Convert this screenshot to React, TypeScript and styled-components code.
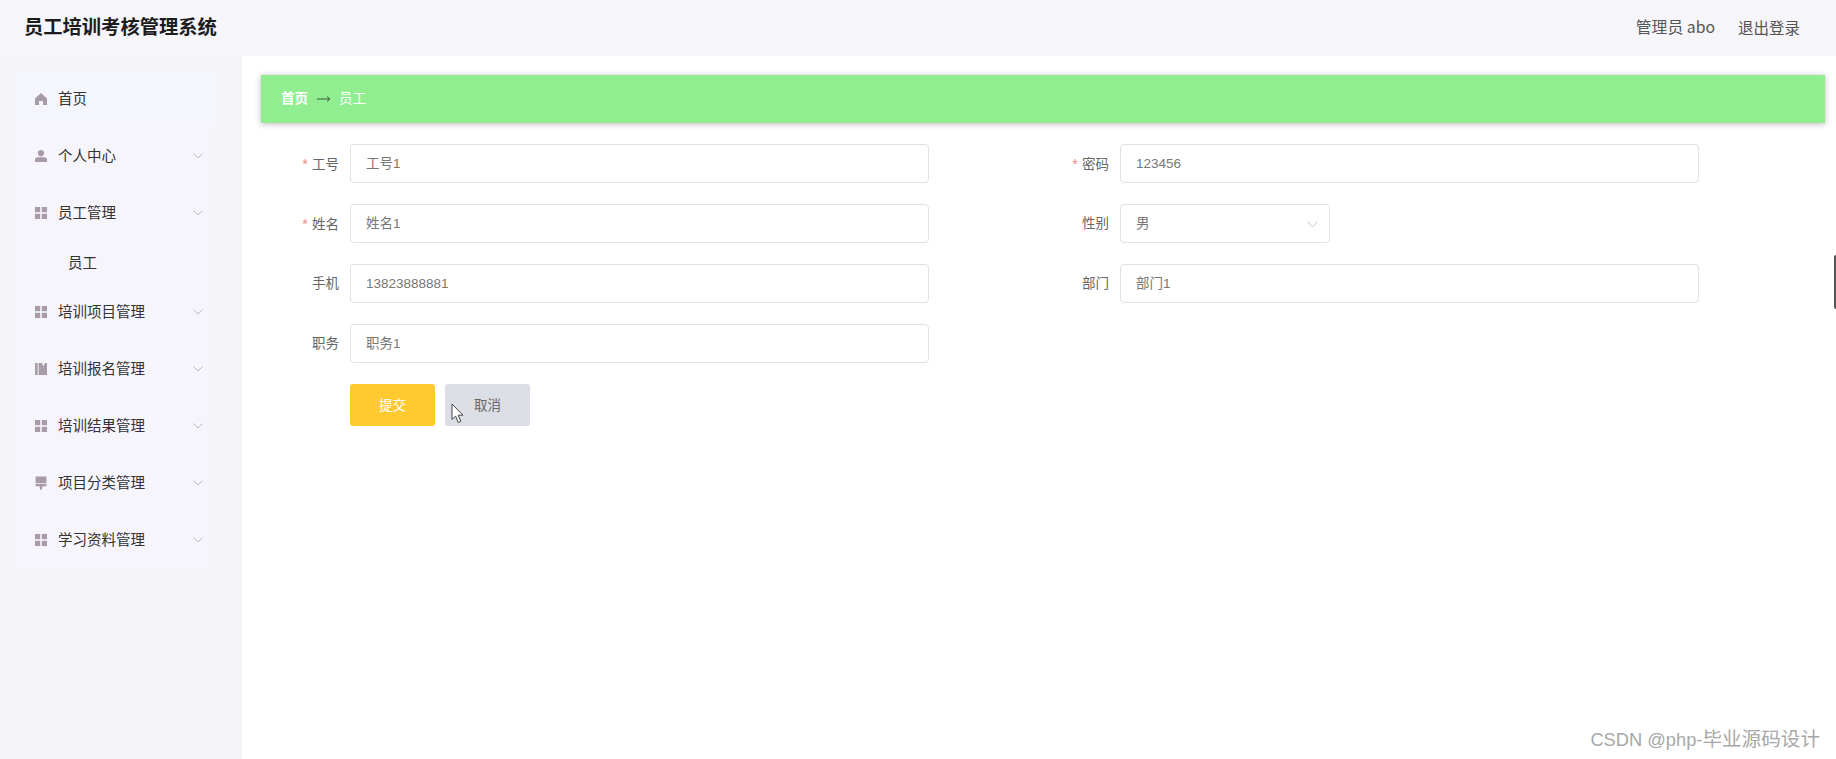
import React from "react";
import styled, { createGlobalStyle } from "styled-components";

const Global = createGlobalStyle`
  html, body { margin: 0; padding: 0; background: #fff; overflow: hidden; }
  body { font-family: "Liberation Sans", "Noto Sans CJK SC", sans-serif; }
  * { box-sizing: border-box; }
`;

const Page = styled.div`
  position: relative;
  width: 1836px;
  height: 759px;
  display: flex;
  flex-direction: column;
  overflow: hidden;
`;

const Header = styled.header`
  flex: 0 0 56px;
  display: flex;
  align-items: center;
  justify-content: space-between;
  padding: 0 36px 0 24px;
  background: #f5f5fa;
`;

const Title = styled.h1`
  margin: 0;
  font-size: 19.3px;
  line-height: 24px;
  font-weight: 700;
  color: #1c1c1c;
`;

const HeaderActions = styled.div`
  display: flex;
  gap: 23px;
  padding-bottom: 2px;
  font-family: "Noto Sans CJK SC", sans-serif;
  font-size: 15.5px;
  line-height: 24px;
  color: #555;
`;

const AdminName = styled.span`
  font-size: 15.8px;
`;

const Body = styled.div`
  flex: 1;
  display: flex;
  min-height: 0;
`;

const Sidebar = styled.aside`
  flex: 0 0 242px;
  background: #f5f5f9;
  padding: 14px 0 0 10px;
`;

const Menu = styled.nav`
  width: 203px;
  background: #f5f5fb;
  padding-bottom: 3px;
`;

const MenuItem = styled.div<{ $active?: boolean }>`
  display: flex;
  align-items: center;
  height: 57px;
  padding-left: 25px;
  width: ${(p) => (p.$active ? "212px" : "auto")};
  background: ${(p) => (p.$active ? "#f5f5fc" : "transparent")};
  font-size: 14.5px;
  color: #333;
`;

const MenuIcon = styled.svg`
  flex: 0 0 12px;
  width: 12px;
  height: 12px;
  margin-right: 11px;
  fill: #a89aa8;
  overflow: visible;
`;

const MenuLabel = styled.span`
  flex: 1;
  line-height: 20px;
`;

const Chevron = styled.svg`
  flex: 0 0 10px;
  width: 10px;
  height: 6px;
  margin-right: 10px;
  fill: none;
  stroke: #b9b9c2;
  stroke-width: 1;
`;

const SubItem = styled.div`
  height: 42px;
  display: flex;
  align-items: center;
  padding: 1px 0 0 58px;
  font-size: 14.5px;
  line-height: 20px;
  color: #333;
`;

const Main = styled.main`
  flex: 1;
  min-width: 0;
  padding: 19px 11px 0 19px;
`;

const Crumbs = styled.div`
  height: 48px;
  display: flex;
  align-items: center;
  padding-left: 20px;
  background: #90ee90;
  box-shadow: 0 1px 6px rgba(70, 50, 70, 0.35);
  font-size: 13.5px;
  line-height: 20px;
  color: #fff;
`;

const CrumbRoot = styled.span`
  font-weight: 700;
`;

const CrumbArrow = styled.svg`
  width: 14px;
  height: 8px;
  margin: 0 8px 0 9px;
  fill: none;
  stroke: #3d5a3d;
  stroke-width: 1;
`;

const Form = styled.form`
  display: grid;
  grid-template-columns: 770px 1fr;
  row-gap: 21px;
  margin-top: 21px;
`;

const Field = styled.div`
  display: flex;
  align-items: center;
  height: 39px;
  margin-left: -2px;
`;

const Label = styled.label`
  flex: 0 0 80px;
  margin-right: 11px;
  padding-top: 1px;
  text-align: right;
  font-size: 13.5px;
  line-height: 20px;
  color: #666;
`;

const Star = styled.span`
  margin-right: 4px;
  font-size: 14.5px;
  color: #f08a8a;
`;

const TextInput = styled.div<{ $w?: number }>`
  width: ${(p) => p.$w ?? 579}px;
  height: 39px;
  display: flex;
  align-items: center;
  justify-content: space-between;
  padding: 1px 15px 0;
  background: #fff;
  border: 1px solid #e0e1e8;
  border-radius: 4px;
  font-size: 13.5px;
  line-height: 20px;
  color: #777;
`;

const SelectChevron = styled.svg`
  width: 11px;
  height: 7px;
  margin-right: -4px;
  fill: none;
  stroke: #c8c8d0;
  stroke-width: 1;
`;

const Actions = styled.div`
  grid-column: 1 / -1;
  display: flex;
  gap: 10px;
  margin-left: 89px;
`;

const Btn = styled.button<{ $primary?: boolean }>`
  width: 85px;
  height: 42px;
  padding: 1px 0 0;
  border: 0;
  border-radius: 3px;
  background: ${(p) => (p.$primary ? "#ffca30" : "#dcdee5")};
  color: ${(p) => (p.$primary ? "#fff" : "#666")};
  font-family: inherit;
  font-size: 13.5px;
  line-height: 20px;
`;

const Cursor = styled.svg`
  position: absolute;
  left: 451px;
  top: 403px;
  width: 13px;
  height: 21px;
`;

const ScrollEdge = styled.div`
  position: absolute;
  right: 0;
  top: 255px;
  width: 2px;
  height: 54px;
  background: #555;
  border-radius: 2px 0 0 2px;
`;

const Watermark = styled.div`
  position: absolute;
  right: 16px;
  top: 726px;
  font-size: 18.3px;
  line-height: 26px;
  color: #a8a8a8;
  white-space: nowrap;
`;

const WatermarkCjk = styled.span`
  font-size: 19.6px;
`;

const icons: Record<string, React.ReactNode> = {
  home: <path d="M6 0 12 5.6V12H8V8H4v4H0V5.6z" />,
  user: (
    <>
      <circle cx="6" cy="3.1" r="3.1" />
      <path d="M0 12V9.6C0 8 1.6 7.2 3 7.2h6c1.4 0 3 .8 3 2.4V12z" />
    </>
  ),
  grid: (
    <>
      <rect x="0" y="0" width="5.2" height="5.2" />
      <rect x="6.8" y="0" width="5.2" height="5.2" />
      <rect x="0" y="6.8" width="5.2" height="5.2" />
      <rect x="6.8" y="6.8" width="5.2" height="5.2" />
    </>
  ),
  chart: (
    <>
      <rect x="0" y="0" width="2.6" height="12" />
      <path d="M3.6 0H7L8.5 3.6 10 0h2V12H3.6z" />
    </>
  ),
  brush: <path d="M.6-.6h10.8v6.8H.6zM.6 7h10.8v2.2H7.4L6.8 12.8H5.2L4.6 9.2H.6z" />,
};

const Icon = ({ name }: { name: string }) => (
  <MenuIcon viewBox="0 0 12 12">{icons[name]}</MenuIcon>
);

const Item = ({
  icon,
  label,
  noArrow,
  active,
}: {
  icon: string;
  label: string;
  noArrow?: boolean;
  active?: boolean;
}) => (
  <MenuItem $active={active}>
    <Icon name={icon} />
    <MenuLabel>{label}</MenuLabel>
    {!noArrow && (
      <Chevron viewBox="0 0 10 6">
        <path d="M.5.5 5 5 9.5.5" />
      </Chevron>
    )}
  </MenuItem>
);

export default function App() {
  return (
    <Page>
      <Global />
      <Header>
        <Title>员工培训考核管理系统</Title>
        <HeaderActions>
          <AdminName>管理员 abo</AdminName>
          <span>退出登录</span>
        </HeaderActions>
      </Header>
      <Body>
        <Sidebar>
          <Menu>
            <Item icon="home" label="首页" noArrow active />
            <Item icon="user" label="个人中心" />
            <Item icon="grid" label="员工管理" />
            <SubItem>员工</SubItem>
            <Item icon="grid" label="培训项目管理" />
            <Item icon="chart" label="培训报名管理" />
            <Item icon="grid" label="培训结果管理" />
            <Item icon="brush" label="项目分类管理" />
            <Item icon="grid" label="学习资料管理" />
          </Menu>
        </Sidebar>
        <Main>
          <Crumbs>
            <CrumbRoot>首页</CrumbRoot>
            <CrumbArrow viewBox="0 0 14 8">
              <path d="M0 4h13M10 1.5 13 4l-3 2.5" />
            </CrumbArrow>
            <span>员工</span>
          </Crumbs>
          <Form>
            <Field>
              <Label><Star>*</Star>工号</Label>
              <TextInput>工号1</TextInput>
            </Field>
            <Field>
              <Label><Star>*</Star>密码</Label>
              <TextInput>123456</TextInput>
            </Field>
            <Field>
              <Label><Star>*</Star>姓名</Label>
              <TextInput>姓名1</TextInput>
            </Field>
            <Field>
              <Label>性别</Label>
              <TextInput $w={210}>
                男
                <SelectChevron viewBox="0 0 11 7">
                  <path d="M.5.5 5.5 6l5-5.5" />
                </SelectChevron>
              </TextInput>
            </Field>
            <Field>
              <Label>手机</Label>
              <TextInput>13823888881</TextInput>
            </Field>
            <Field>
              <Label>部门</Label>
              <TextInput>部门1</TextInput>
            </Field>
            <Field>
              <Label>职务</Label>
              <TextInput>职务1</TextInput>
            </Field>
            <Actions>
              <Btn type="button" $primary>提交</Btn>
              <Btn type="button">取消</Btn>
            </Actions>
          </Form>
        </Main>
      </Body>
      <Cursor viewBox="0 0 13 21">
        <path d="M1 1v15.5l3.6-3.4 2.6 6.4 2.6-1.1-2.6-6.2H12z" fill="#fff" stroke="#444" strokeWidth="1" />
      </Cursor>
      <ScrollEdge />
      <Watermark>CSDN @php-<WatermarkCjk>毕业源码设计</WatermarkCjk></Watermark>
    </Page>
  );
}
